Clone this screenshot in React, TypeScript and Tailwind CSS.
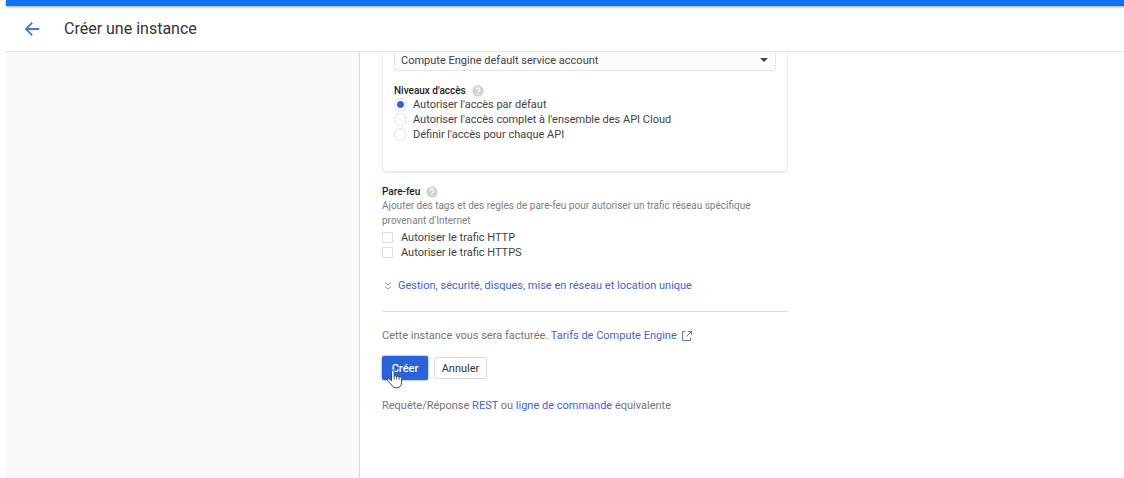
import type { ReactNode } from "react";

const ACCESS_SCOPES = [
  { id: "default", label: "Autoriser l'accès par défaut" },
  { id: "full", label: "Autoriser l'accès complet à l'ensemble des API Cloud" },
  { id: "custom", label: "Définir l'accès pour chaque API" },
] as const;

const FIREWALL_RULES = [
  { id: "http", label: "Autoriser le trafic HTTP" },
  { id: "https", label: "Autoriser le trafic HTTPS" },
] as const;

function HelpIcon() {
  return (
    <svg viewBox="0 0 12 12" className="size-3" aria-hidden="true">
      <circle cx="6" cy="6" r="5.7" fill="#d2d2d2" />
      <path d="M4.2 4.7a1.8 1.8 0 1 1 2.7 1.5c-.6.4-.9.6-.9 1.2" fill="none" stroke="#fff" strokeWidth="1.1" />
      <circle cx="6" cy="8.9" r=".7" fill="#fff" />
    </svg>
  );
}

function HandCursor() {
  return (
    <svg viewBox="0 0 17 20" className="pointer-events-none absolute top-[13px] left-1 h-5 w-[17px]" aria-hidden="true">
      <path
        d="M5.5 2.4c0-1.9 2.6-1.9 2.6 0v5.2c.3-1.3 2.4-1.1 2.5.3.5-1 2.3-.8 2.4.6.7-.8 2.6-.5 2.6 1v4.2c0 3-2 5.1-5 5.1-2.4 0-3.800-.9-4.900-2.700L1.500 11.700c-.8-1.500 1.100-2.600 2.200-1.400l1.800 1.500z"
        fill="#fff"
        stroke="#444"
        strokeWidth="1"
        strokeLinejoin="round"
      />
      <path d="M8.100 7.500v3M10.600 8v2.500M13 8.600v2.200" stroke="#444" strokeWidth=".9" fill="none" />
    </svg>
  );
}

function FieldTitle({ id, children }: { id: string; children: ReactNode }) {
  return (
    <div id={id} className="flex items-center gap-1.5 text-[10px] leading-[13px] font-medium text-[#222]">
      {children}
      <HelpIcon />
    </div>
  );
}

function TextLink({ children }: { children: ReactNode }) {
  return (
    <a href="#" className="text-[#3f63d2] hover:underline">
      {children}
    </a>
  );
}

export default function App() {
  return (
    <div className="flex min-h-screen flex-col bg-white pl-1.5 font-['Roboto',sans-serif] text-[11px] leading-[15px] text-[#424242]">
      <div className="z-10 h-1.5 bg-[#1071f0] shadow-[0_1px_3px_rgba(60,50,80,0.5)]" />

      <header className="flex h-[46px] items-center gap-6 border-b border-[#e6e6e6] pl-[18px]">
        <a href="#" aria-label="Retour">
          <svg viewBox="0 0 16 16" className="size-4" fill="none" stroke="#4479dc" strokeWidth="1.8">
            <path d="M15.200 8H2.200M8.200 1.700L2 8l6.200 6.300" />
          </svg>
        </a>
        <h1 className="text-base text-[#333]">Créer une instance</h1>
      </header>

      <div className="flex grow">
        <aside className="w-[354px] shrink-0 border-r border-[#dadada] bg-[#fafafa]" />

        <main className="min-w-0 grow px-[22px]">
          <form className="max-w-[406px]" onSubmit={(e) => e.preventDefault()}>
            <section className="rounded-b-sm border border-t-0 border-[#ececec] px-[11px] pb-[29px] shadow-[0_1px_1px_rgba(0,0,0,0.08)]">
              <div className="relative">
                <select
                  aria-label="Compte de service"
                  className="block h-[19px] w-full appearance-none rounded-b-sm border border-t-0 border-[#e4e4e4] bg-[#fcfcfc] px-1.5 pb-0.5 text-[#424242]"
                >
                  <option>Compute Engine default service account</option>
                </select>
                <svg viewBox="0 0 8 4" className="pointer-events-none absolute top-1.5 right-2 h-1 w-2" aria-hidden="true">
                  <path d="M0 0h8L4 4z" fill="#444" />
                </svg>
              </div>

              <div role="radiogroup" aria-labelledby="scopes-title" className="pt-[13px]">
                <FieldTitle id="scopes-title">Niveaux d'accès</FieldTitle>
                {ACCESS_SCOPES.map((scope) => (
                  <label key={scope.id} className="flex items-center gap-1.5">
                    <input
                      type="radio"
                      name="scope"
                      value={scope.id}
                      defaultChecked={scope.id === "default"}
                      className="size-[13px] appearance-none rounded-full border border-[#e0e0e0] bg-white checked:border-[#d3def5] checked:bg-[radial-gradient(circle,#3263d0_3px,#fff_4px)]"
                    />
                    {scope.label}
                  </label>
                ))}
              </div>
            </section>

            <section role="group" aria-labelledby="firewall-title" className="pt-[13px]">
              <FieldTitle id="firewall-title">Pare-feu</FieldTitle>
              <p className="text-[10px] text-[#808080]">
                Ajouter des tags et des règles de pare-feu pour autoriser un trafic réseau spécifique provenant d'Internet
              </p>
              <div className="pt-0.5">
                {FIREWALL_RULES.map((rule) => (
                  <label key={rule.id} className="flex items-center gap-2">
                    <input
                      type="checkbox"
                      name={rule.id}
                      className="size-[11px] appearance-none border border-[#e0e0e0] bg-white checked:bg-[#3263d0]"
                    />
                    {rule.label}
                  </label>
                ))}
              </div>
            </section>

            <a href="#" className="mt-[18px] flex items-center gap-1.5 pl-0.5 text-[#3f63d2]">
              <svg viewBox="0 0 8 8" className="size-2" fill="none" stroke="#7d96e0" strokeWidth="1" aria-hidden="true">
                <path d="M1 .5l3 2.500 3-2.500M1 4.500l3 2.500 3-2.500" />
              </svg>
              Gestion, sécurité, disques, mise en réseau et location unique
            </a>

            <hr className="mt-[18px] border-[#dedede]" />

            <p className="mt-4 flex items-center gap-1 text-[#757575]">
              <span>
                Cette instance vous sera facturée. <TextLink>Tarifs de Compute Engine</TextLink>
              </span>
              <svg viewBox="0 0 12 12" className="size-3" fill="none" stroke="#777" strokeWidth="1" aria-hidden="true">
                <path d="M4.500 1.500h-3v9h8v-3M7 1.500h3.500V5M10.500 1.500L5.500 6.500" />
              </svg>
            </p>

            <div className="mt-[13px] flex items-center gap-1.5">
              <div className="relative">
                <button type="submit" className="block h-6 w-[46px] rounded-xs bg-[#2a63d6] font-medium text-white shadow-[0_0_2px_#2a63d6]">
                  Créer
                </button>
                <HandCursor />
              </div>
              <button type="button" className="h-[22px] w-[53px] rounded-xs border border-[#dedede] bg-white text-[#333]">
                Annuler
              </button>
            </div>

            <p className="mt-[18px] text-[#757575]">
              Requête/Réponse <TextLink>REST</TextLink> ou <TextLink>ligne de commande</TextLink> équivalente
            </p>
          </form>
        </main>
      </div>
    </div>
  );
}
